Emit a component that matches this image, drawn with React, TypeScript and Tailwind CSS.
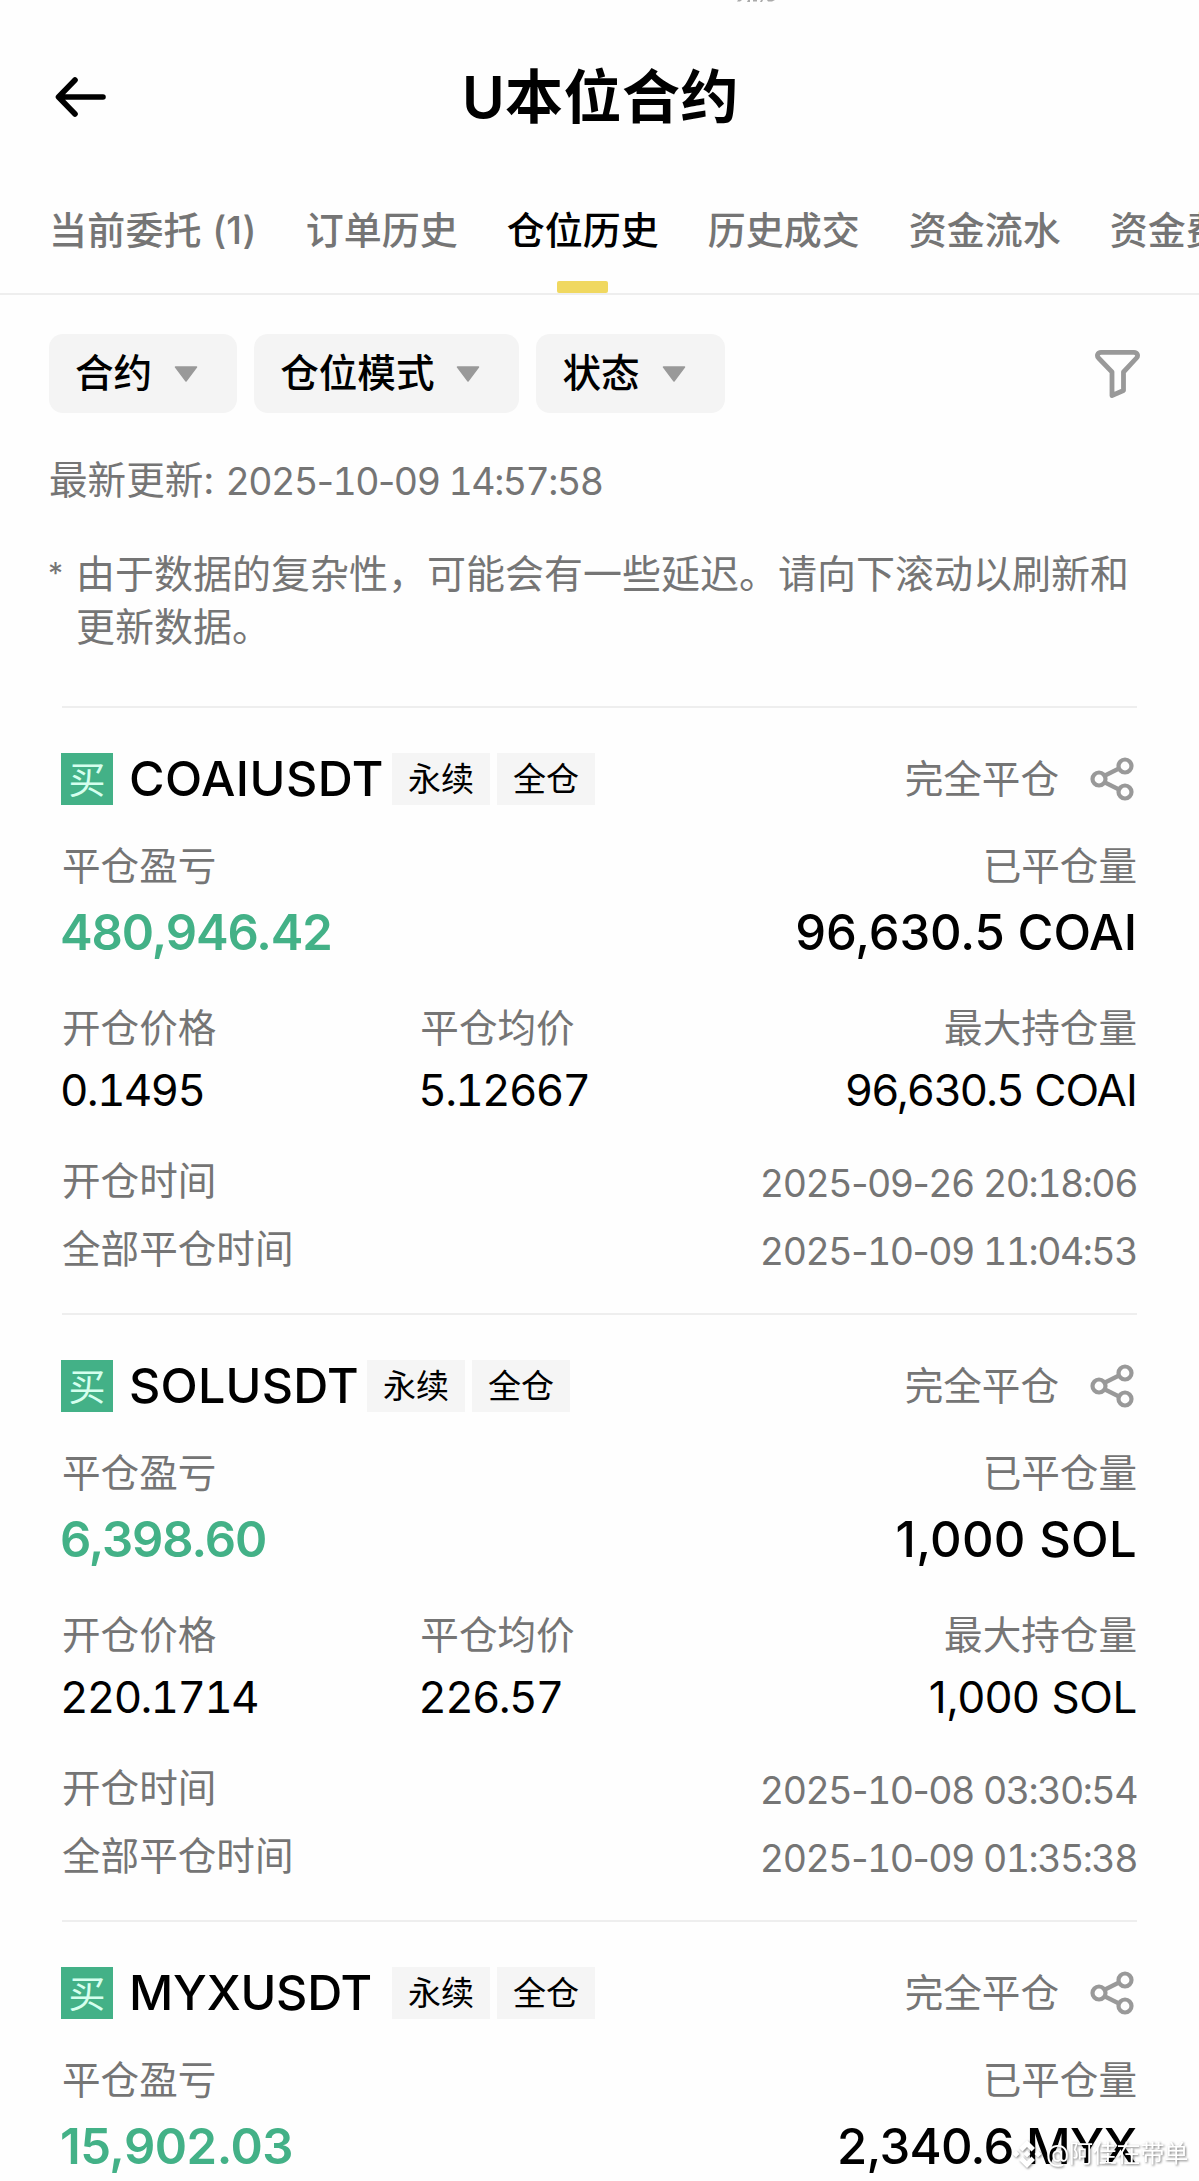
interface Position {
  symbol: string;
  pnl: string;
  closed: string;
  entry: string;
  exit: string;
  max: string;
  openedAt: string;
  closedAt: string;
  symbolClass: string;
  pnlClass: string;
  closedClass: string;
  maxClass: string;
}

const tabs = ["当前委托 (1)", "订单历史", "仓位历史", "历史成交", "资金流水", "资金费用"];
const filters = ["合约", "仓位模式", "状态"];

const positions: Position[] = [
  {
    symbol: "COAIUSDT",
    pnl: "480,946.42",
    closed: "96,630.5 COAI",
    entry: "0.1495",
    exit: "5.12667",
    max: "96,630.5 COAI",
    openedAt: "2025-09-26 20:18:06",
    closedAt: "2025-10-09 11:04:53",
    symbolClass: "w-[262px] tracking-[0.5px]",
    pnlClass: "tracking-[-1.1px]",
    closedClass: "tracking-[-0.1px]",
    maxClass: "tracking-[-0.9px]",
  },
  {
    symbol: "SOLUSDT",
    pnl: "6,398.60",
    closed: "1,000 SOL",
    entry: "220.1714",
    exit: "226.57",
    max: "1,000 SOL",
    openedAt: "2025-10-08 03:30:54",
    closedAt: "2025-10-09 01:35:38",
    symbolClass: "w-[237px] tracking-[0.2px]",
    pnlClass: "tracking-[-1.1px]",
    closedClass: "tracking-[0.3px]",
    maxClass: "tracking-[-0.4px]",
  },
  {
    symbol: "MYXUSDT",
    pnl: "15,902.03",
    closed: "2,340.6 MYX",
    entry: "",
    exit: "",
    max: "",
    openedAt: "",
    closedAt: "",
    symbolClass: "w-[262px] tracking-[-0.2px]",
    pnlClass: "tracking-[-0.5px]",
    closedClass: "tracking-[-0.7px]",
    maxClass: "",
  },
];

const BackIcon = () => (
  <svg width="52" height="42" viewBox="0 0 52 42" fill="none" stroke="#000" strokeWidth="5.600" strokeLinecap="round" strokeLinejoin="round">
    <path d="M20 4L3.500 21L20 38M4 21H48" />
  </svg>
);

const FilterIcon = () => (
  <svg width="45" height="50" viewBox="0 0 45 50" fill="none" stroke="#999" strokeWidth="4.8" strokeLinejoin="round">
    <path d="M6 3.300H39C42.500 3.300 43.500 6.800 41.500 9L28.500 23V41.500L17 46.500V23L3.500 9C1.500 6.800 2.500 3.300 6 3.300Z" />
  </svg>
);

const ShareIcon = () => (
  <svg width="44" height="44" viewBox="0 0 44 44" fill="none" stroke="#999" strokeWidth="4.2">
    <circle cx="9" cy="22" r="6.500" />
    <circle cx="35" cy="9" r="6.500" />
    <circle cx="35" cy="35" r="6.500" />
    <path d="M15 18.500L29 11.500M15 25.500L29 32.500" />
  </svg>
);

/* ── Date and time: tabular digits, but hyphens and the space keep their own width ── */
const Timestamp = ({ value }: { value: string }) => (
  <span className="whitespace-pre text-[37.5px] tracking-[-1.5px]">
    {value.split(/([- ])/).map((part, i) => (
      <span key={i} className={i % 2 ? "" : "tabular-nums"}>{part}</span>
    ))}
  </span>
);

/* ── Poster's signature in the bottom right corner ── */
const Watermark = () => (
  <div className="absolute left-[1012px] top-[2138px] flex items-center gap-[4px] whitespace-nowrap text-[24px] leading-[32px] text-white [filter:drop-shadow(1px_1px_1px_rgba(0,0,0,0.5))]">
    <svg width="30" height="30" viewBox="0 0 30 30" fill="#fff">
      <path d="M15 1L23 9L19.500 12.500L15 8L10.500 12.500L7 9Z" />
      <path d="M15 29L7 21L10.500 17.500L15 22L19.500 17.500L23 21Z" />
      <path d="M15 11.500L18.500 15L15 18.500L11.500 15Z" />
      <path d="M4 11.500L7.500 15L4 18.500L0.500 15Z" />
      <path d="M26 11.500L29.500 15L26 18.500L22.500 15Z" />
    </svg>
    <span className="tracking-[-0.2px]">@阿佳在带单</span>
  </div>
);

const PositionCard = ({ item }: { item: Position }) => (
  <article className="border-t-2 border-[#eeeeee] pt-[45px] pb-[44px] leading-none text-[38.6px] text-[#757575]">
    <div className="flex h-[52px] items-center">
      <span className="-ml-[1px] flex size-[52px] shrink-0 items-center justify-center bg-[#43b187] pt-[2px] text-[37px] text-[#d5ffee]">
        买
      </span>
      <h2 className={`ml-[16px] shrink-0 whitespace-nowrap text-[48.5px] font-medium text-black ${item.symbolClass}`}>
        {item.symbol}
      </h2>
      <div className="ml-px flex gap-[7px] text-[33px] text-black">
        <span className="flex h-[52px] w-[98px] items-center justify-center bg-[#f5f5f5]">永续</span>
        <span className="flex h-[52px] w-[98px] items-center justify-center bg-[#f5f5f5]">全仓</span>
      </div>
      <span className="ml-auto mr-[31px]">完全平仓</span>
      <div className="mr-[3px]">
        <ShareIcon />
      </div>
    </div>

    <div className="mt-[41px] flex h-10 items-center justify-between">
      <span>平仓盈亏</span>
      <span>已平仓量</span>
    </div>
    <div className="mt-[22px] flex h-12 items-center justify-between text-[49px] font-medium">
      <span className={`-ml-[2px] font-semibold text-[#43b187] ${item.pnlClass}`}>{item.pnl}</span>
      <span className={`text-black ${item.closedClass}`}>{item.closed}</span>
    </div>

    {item.entry && (
      <>
        <div className="mt-[52px] grid h-10 grid-cols-3 items-center">
          <span>开仓价格</span>
          <span>平仓均价</span>
          <span className="text-right">最大持仓量</span>
        </div>
        <div className="mt-[18px] grid h-[47px] grid-cols-3 items-center whitespace-nowrap text-[44px] text-black">
          <span className="-ml-[2px] tabular-nums tracking-[-1.700px]">{item.entry}</span>
          <span className="-ml-[2px] tabular-nums tracking-[-1.700px]">{item.exit}</span>
          <span className={`text-right ${item.maxClass}`}>{item.max}</span>
        </div>
        <div className="mt-[48px] flex h-10 items-center justify-between">
          <span>开仓时间</span>
          <div className="pt-[4px]">
            <Timestamp value={item.openedAt} />
          </div>
        </div>
        <div className="mt-7 flex h-10 items-center justify-between">
          <span>全部平仓时间</span>
          <div className="pt-[4px]">
            <Timestamp value={item.closedAt} />
          </div>
        </div>
      </>
    )}
  </article>
);

const App = () => {
  return (
    <main className="relative h-[2181px] w-[1199px] overflow-hidden bg-[#fefefe] font-['Inter','Noto_Sans_CJK_SC',sans-serif] leading-none text-[#757575]">
      {/* sliver of the row above the header */}
      <svg className="absolute left-[737px] top-0" width="42" height="3" viewBox="0 0 42 3" fill="#aaa">
        <path d="M1 0H5L3 1.500H0ZM11 0H13V2H10ZM16 0H20V1.500H16ZM24 0H26L25 2H23ZM30 0H38L35 1.500H31Z" />
      </svg>

      <header className="relative flex h-[194px] items-center justify-center">
        <div className="absolute left-[55px] top-[76px]">
          <BackIcon />
        </div>
        <h1 className="pl-[2px] text-[58px] font-bold tracking-[0.5px] text-black">
          <span className="font-semibold">U</span>本位合约
        </h1>
      </header>

      <nav className="flex h-[101px] gap-[49px] overflow-hidden whitespace-nowrap border-b-2 border-[#eeeeee] pl-[49px] text-[38px] font-medium">
        {tabs.map((tab, i) => (
          <div key={tab} className="relative flex h-[99px] shrink-0 justify-center pt-[17px]">
            <span className={tab === "仓位历史" ? "text-black" : i === 0 ? "tracking-[0.2px]" : ""}>{tab}</span>
            {tab === "仓位历史" && <span className="absolute bottom-0 h-3 w-[51px] rounded-[2px] bg-[#f0d860]" />}
          </div>
        ))}
      </nav>

      <div className="mt-[39px] flex h-[79px] items-center pl-[49px] pr-[59px]">
        <div className="flex gap-[17px]">
          {filters.map((f) => (
            <button key={f} className="flex h-[79px] items-center rounded-[14px] bg-[#f4f4f4] pl-[26px] pr-[39px] text-[38.6px] font-medium text-black">
              {f}
              <svg className="ml-[22px]" width="24" height="16" viewBox="0 0 24 16">
                <path d="M1.500 1H22.500L12 15Z" fill="#999" stroke="#999" strokeWidth="1.500" strokeLinejoin="round" />
              </svg>
            </button>
          ))}
        </div>
        <div className="ml-auto">
          <FilterIcon />
        </div>
      </div>

      <p className="mt-[48px] flex h-[39px] items-center pl-[49px] text-[38.6px]">
        最新更新:
        <span className="pl-[11px] pt-[2px]">
          <Timestamp value="2025-10-09 14:57:58" />
        </span>
      </p>
      <div className="mt-[47px] flex pl-[48px] text-[39px] leading-[53px]">
        <span className="w-[28px] text-[30px]">*</span>
        <p className="w-[1060px]">由于数据的复杂性，可能会有一些延迟。请向下滚动以刷新和更新数据。</p>
      </div>

      <section className="mt-[53px] pl-[62px] pr-[62px]">
        {positions.map((item) => (
          <PositionCard key={item.symbol} item={item} />
        ))}
      </section>

      <Watermark />
    </main>
  );
};

export default App;
